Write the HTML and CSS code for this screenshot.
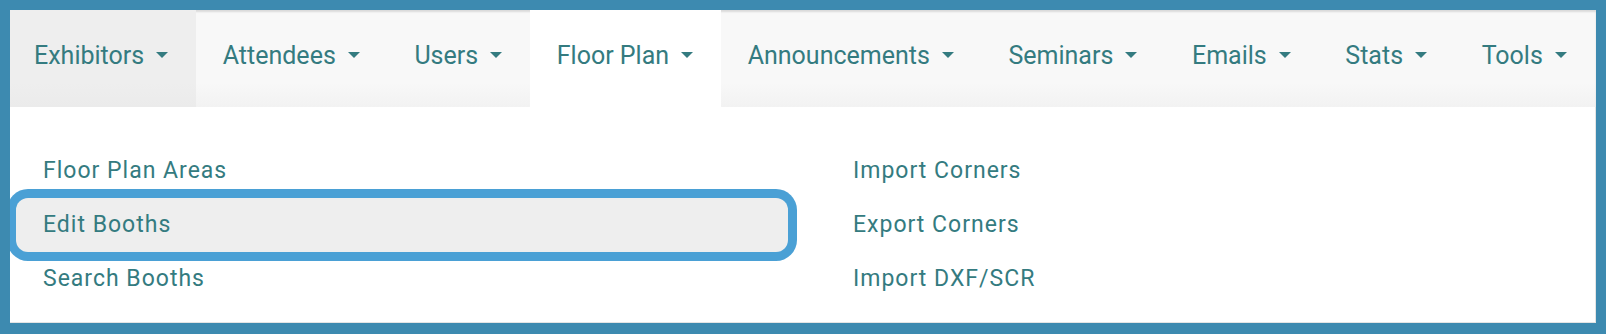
FILE: index.html
```html
<!DOCTYPE html>
<html>
<head>
<meta charset="utf-8">
<link rel="stylesheet" href="styles.css">
</head>
<body>
<div class="frame">
  <nav class="navbar">
    <ul class="nav">
      <li class="nav-item first hovered">Exhibitors<span class="caret"></span></li>
      <li class="nav-item">Attendees<span class="caret"></span></li>
      <li class="nav-item">Users<span class="caret"></span></li>
      <li class="nav-item open">Floor Plan<span class="caret"></span></li>
      <li class="nav-item">Announcements<span class="caret"></span></li>
      <li class="nav-item">Seminars<span class="caret"></span></li>
      <li class="nav-item">Emails<span class="caret"></span></li>
      <li class="nav-item">Stats<span class="caret"></span></li>
      <li class="nav-item">Tools<span class="caret"></span></li>
    </ul>
  </nav>
  <div class="dropdown">
    <ul class="menu-col">
      <li class="menu-item">Floor Plan Areas</li>
      <li class="menu-item active">Edit Booths</li>
      <li class="menu-item">Search Booths</li>
    </ul>
    <ul class="menu-col">
      <li class="menu-item">Import Corners</li>
      <li class="menu-item">Export Corners</li>
      <li class="menu-item">Import DXF/SCR</li>
    </ul>
  </div>
</div>
</body>
</html>
```

FILE: styles.css
```css
html, body {
  margin: 0;
  padding: 0;
  background: #3d8ab0;
}
.frame {
  box-sizing: border-box;
  width: 1606px;
  height: 334px;
  border: 10px solid #3d8ab0;
  border-bottom-width: 11px;
  background: #ffffff;
  overflow: hidden;
  font-family: Roboto, "Liberation Sans", sans-serif;
  color: #347b80;
  box-shadow: inset -1px -1px 0 #e4e4e4;
}
.navbar {
  height: 97px;
  background: linear-gradient(to bottom, #f8f8f8 0%, #f8f8f8 75%, #f2f2f2 100%);
  box-shadow: inset 0 2px 2px rgba(0,0,0,0.12);
}
.nav {
  display: flex;
  margin: 0;
  padding: 0;
  list-style: none;
  height: 100%;
}
.nav-item {
  font-size: 25px;
  line-height: 91px;
  padding: 0 28px 6px 26.6px;
  white-space: nowrap;
}
.nav-item.first {
  padding-left: 24px;
  padding-right: 28px;
}
.nav-item.hovered {
  background: linear-gradient(to bottom, #eeeeee 0%, #eeeeee 75%, #ebebeb 100%);
}
.nav-item.open {
  background: #ffffff;
}
.caret {
  display: inline-block;
  width: 0;
  height: 0;
  margin-left: 12px;
  vertical-align: middle;
  border-top: 6px solid #347b80;
  border-left: 6px solid transparent;
  border-right: 6px solid transparent;
  position: relative;
  top: -2px;
}
.dropdown {
  display: grid;
  grid-template-columns: 772px 1fr;
  column-gap: 38px;
  padding: 37px 0 0 6px;
}
.menu-col {
  margin: 0;
  padding: 0;
  list-style: none;
}
.menu-item {
  font-size: 23px;
  letter-spacing: 1px;
  line-height: 54px;
  height: 54px;
  padding-left: 27px;
  border-radius: 12px;
  white-space: nowrap;
}
.menu-item.active {
  background: #eeeeee;
  box-shadow: 0 0 0 9px #4aa0d5;
}
```
